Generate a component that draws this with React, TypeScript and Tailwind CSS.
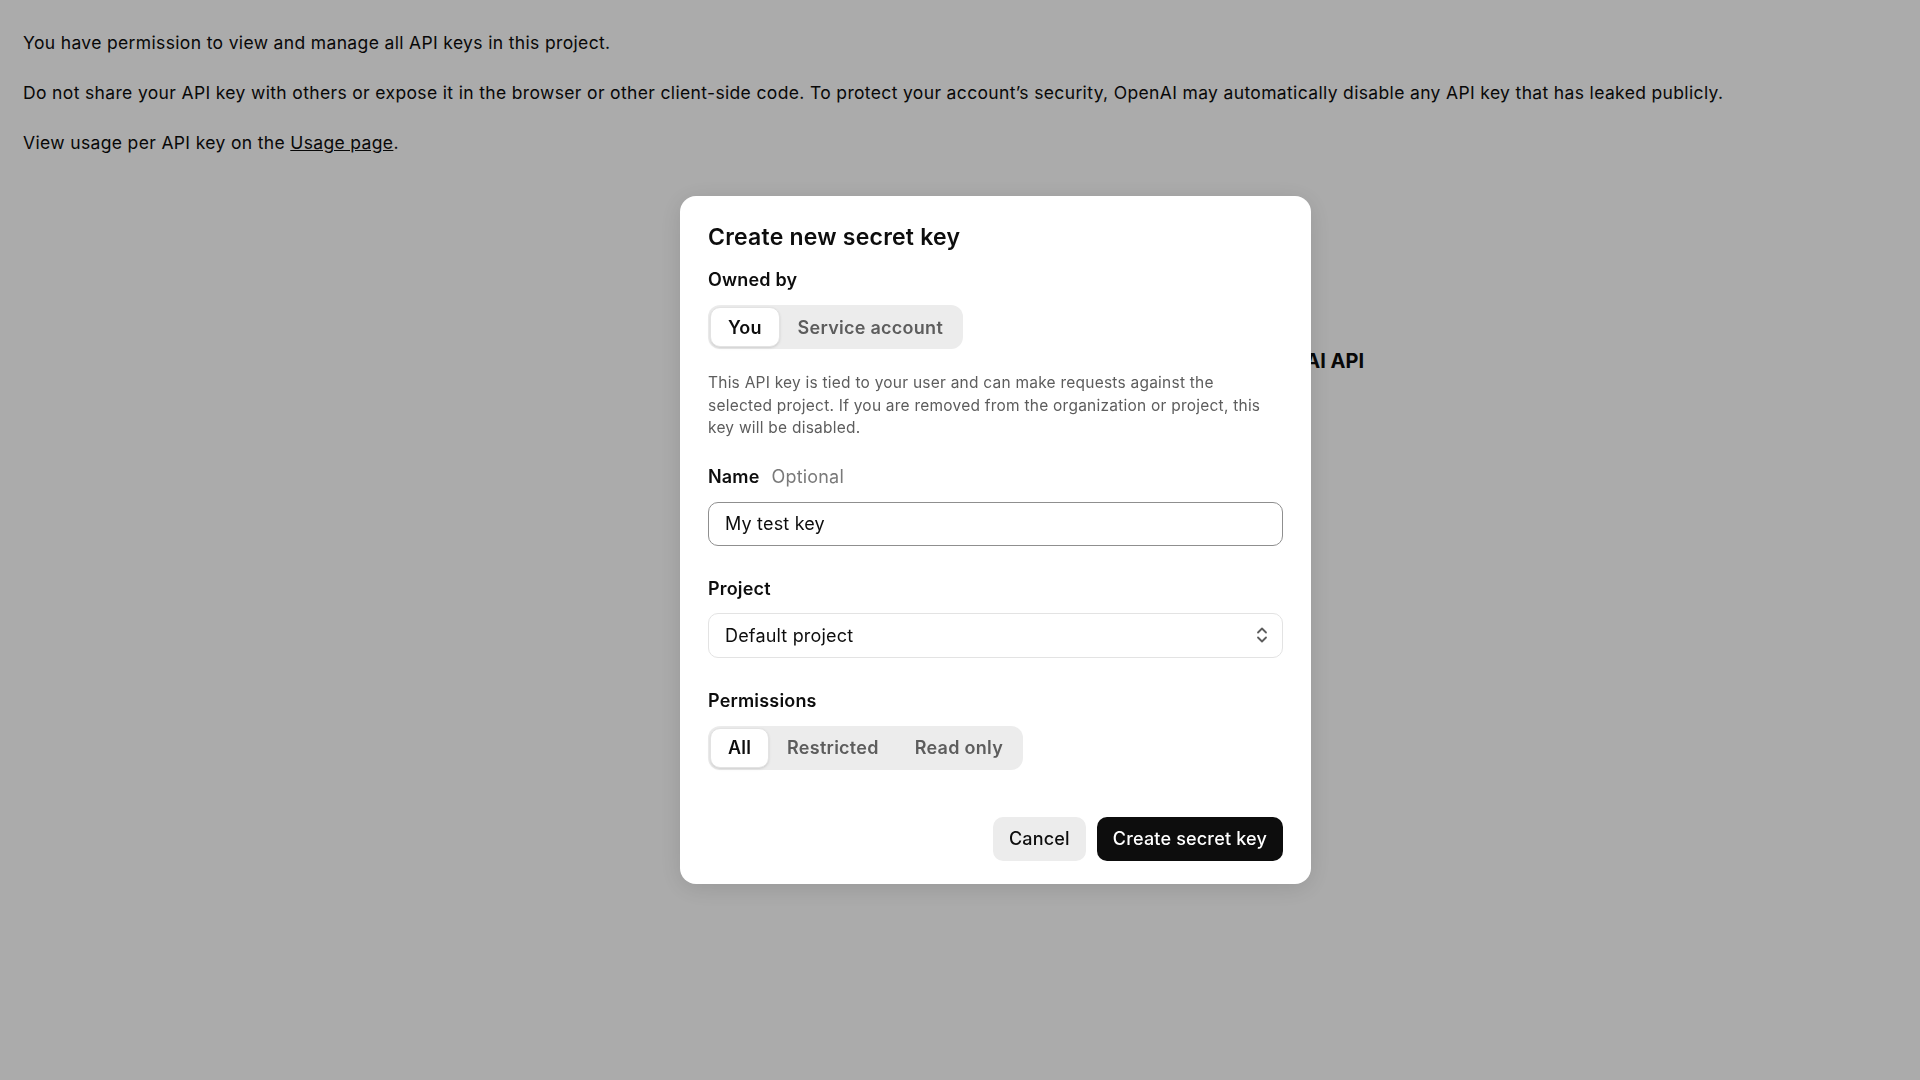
import { useState } from 'react';

const OWNERS = ['You', 'Service account'];
const PERMS = ['All', 'Restricted', 'Read only'];

function Segmented({ options, value, onChange }: { options: string[]; value: string; onChange: (v: string) => void }) {
  return (
    <div className="inline-flex h-11 items-center rounded-[12px] bg-[#ececec] p-[2px]">
      {options.map(o => (
        <button
          key={o}
          onClick={() => onChange(o)}
          className={
            o === value
              ? 'h-10 rounded-[10px] border border-[#e3e3e3] bg-white px-[17px] text-[18px] font-semibold tracking-[0.01em] text-[#0d0d0d] shadow-sm'
              : 'h-10 rounded-[10px] px-[18px] text-[18px] font-semibold tracking-[0.015em] text-[#5d5d5d]'
          }
        >
          {o}
        </button>
      ))}
    </div>
  );
}

export default function App() {
  const [owner, setOwner] = useState('You');
  const [perm, setPerm] = useState('All');
  const [name, setName] = useState('My test key');

  return (
    <div className="relative min-h-screen bg-white font-['Inter','Liberation_Sans',sans-serif] text-[#0d0d0d]">
      {/* page behind the dialog */}
      <div className="flex flex-col gap-[26px] px-[23px] pt-[31px] text-[17.5px] leading-6 tracking-[0.02em]">
        <p>You have permission to view and manage all API keys in this project.</p>
        <p>
          Do not share your API key with others or expose it in the browser or other client-side code. To protect your
          account&rsquo;s security, OpenAI may automatically disable any API key that has leaked publicly.
        </p>
        <p>
          View usage per API key on the <a className="underline">Usage page</a>.
        </p>
      </div>
      <div className="mt-[192px] w-[1364px] text-right text-[20px] font-bold leading-7">
        Create an API key to access the OpenAI API
      </div>

      {/* overlay */}
      <div className="fixed inset-0 flex items-center justify-center bg-black/[0.33] pl-[71px]">
        <div className="w-[631px] rounded-[16px] bg-white px-7 pb-[23px] pt-[26px] shadow-[0_4px_24px_rgba(0,0,0,0.12)]">
          <h2 className="text-[23px] font-semibold leading-[30px] tracking-[0.01em]">Create new secret key</h2>

          <div className="mt-[16px] text-[18px] font-semibold leading-6 tracking-[0.01em]">Owned by</div>
          <div className="mt-[13px]">
            <Segmented options={OWNERS} value={owner} onChange={setOwner} />
          </div>
          <p className="mt-[23px] max-w-[565px] text-[15.5px] leading-[22.5px] tracking-[0.015em] text-[#5d5d5d]">
            This API key is tied to your user and can make requests against the selected project. If you are removed from
            the organization or project, this key will be disabled.
          </p>

          <div className="mt-[25px] flex items-baseline gap-[12px] text-[18px] leading-6 tracking-[0.01em]">
            <span className="font-semibold">Name</span>
            <span className="text-[#7a7a7a]">Optional</span>
          </div>
          <input
            value={name}
            onChange={e => setName(e.target.value)}
            className="mt-[13px] h-11 w-full rounded-[10px] border border-[#8f8f8f] px-4 text-[18px] tracking-[0.01em] outline-none"
          />

          <div className="mt-[31px] text-[18px] font-semibold leading-6 tracking-[0.01em]">Project</div>
          <div className="mt-[12px] flex h-[45px] w-full items-center justify-between rounded-[10px] border border-[#e3e3e3] pl-4 pr-[14px] text-[18px] tracking-[0.01em]">
            <span>Default project</span>
            <svg width="12" height="16" viewBox="0 0 12 16" fill="none" stroke="#5d5d5d" strokeWidth="1.8" strokeLinecap="round" strokeLinejoin="round">
              <path d="M2 5.5l4-4 4 4" />
              <path d="M2 10.5l4 4 4-4" />
            </svg>
          </div>

          <div className="mt-[31px] text-[18px] font-semibold leading-6 tracking-[0.01em]">Permissions</div>
          <div className="mt-[13px]">
            <Segmented options={PERMS} value={perm} onChange={setPerm} />
          </div>

          <div className="mt-[47px] flex justify-end gap-[11px]">
            <button className="h-11 rounded-[10px] bg-[#ececec] px-4 text-[18px] font-medium tracking-[0.01em]">Cancel</button>
            <button className="h-11 rounded-[10px] bg-[#0d0d0d] px-4 text-[18px] font-medium tracking-[0.01em] text-white">
              Create secret key
            </button>
          </div>
        </div>
      </div>
    </div>
  );
}
